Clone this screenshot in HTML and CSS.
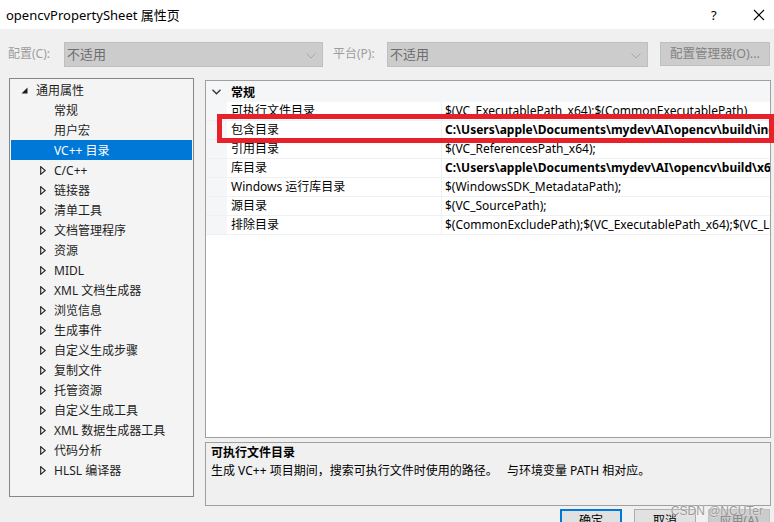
FILE: index.html
```html
<!DOCTYPE html>
<html lang="zh-CN">
<head>
    <meta charset="UTF-8">
    <title>opencvPropertySheet 属性页</title>
    <link rel="stylesheet" href="styles.css">
</head>
<body>
    <div class="dialog">
        <!-- Barra de título -->
        <div class="titlebar">
            <span class="title">opencvPropertySheet 属性页</span>
            <span class="help">?</span>
            <svg class="close" width="12" height="12" viewBox="0 0 12 12"><path d="M1 1L11 11M11 1L1 11" stroke="#000" stroke-width="1.1"/></svg>
        </div>

        <!-- Configuração / plataforma -->
        <div class="toolbar">
            <span class="label lbl-config">配置(C):</span>
            <div class="select sel-config">不适用<svg class="chev" width="10" height="6" viewBox="0 0 10 6"><path d="M0.5 0.5L5 5L9.5 0.5" fill="none" stroke="#a8a8a8"/></svg></div>
            <span class="label lbl-platform">平台(P):</span>
            <div class="select sel-platform">不适用<svg class="chev" width="10" height="6" viewBox="0 0 10 6"><path d="M0.5 0.5L5 5L9.5 0.5" fill="none" stroke="#a8a8a8"/></svg></div>
            <div class="btn-disabled cfg-btn">配置管理器(O)...</div>
        </div>

        <div class="main">
            <!-- Árvore -->
            <div class="tree">
                <div class="node root">
                    <svg class="arrow-open" width="7" height="7" viewBox="0 0 7 7"><polygon points="6.5,0.5 6.5,6.5 0.5,6.5" fill="#1e1e1e"/></svg>
                    <span>通用属性</span>
                </div>
                <div class="node leaf">常规</div>
                <div class="node leaf">用户宏</div>
                <div class="node leaf selected">VC++ 目录</div>
                <div id="tree-items"></div>
            </div>

            <!-- Grade de propriedades -->
            <div class="right">
                <div class="grid">
                    <div class="cat">
                        <svg class="cat-chev" width="9" height="6" viewBox="0 0 9 6"><path d="M0.5 0.8L4.5 4.8L8.5 0.8" fill="none" stroke="#333" stroke-width="1.3"/></svg>
                        <span>常规</span>
                    </div>
                    <div id="rows"></div>
                    <div class="highlight"></div>
                </div>
                <div class="desc">
                    <div class="desc-title">可执行文件目录</div>
                    <div class="desc-text">生成 VC++ 项目期间，搜索可执行文件时使用的路径。&nbsp;&nbsp; 与环境变量 PATH 相对应。</div>
                </div>
            </div>
        </div>

        <div class="footer">
            <div class="btn ok">确定</div>
            <div class="btn">取消</div>
            <div class="btn-disabled apply">应用(A)</div>
            <span class="watermark">CSDN @NCUTer</span>
        </div>
    </div>

    <script>
        // Itens recolhidos da árvore
        const treeItems = ["C/C++", "链接器", "清单工具", "文档管理程序", "资源", "MIDL", "XML 文档生成器",
            "浏览信息", "生成事件", "自定义生成步骤", "复制文件", "托管资源", "自定义生成工具",
            "XML 数据生成器工具", "代码分析", "HLSL 编译器"];

        const treeBox = document.getElementById('tree-items');
        treeItems.forEach(name => {
            const node = document.createElement('div');
            node.className = 'node child';
            node.innerHTML = `<svg class="arrow" width="6" height="9" viewBox="0 0 6 9"><polygon points="0.7,0.7 5.2,4.5 0.7,8.3" fill="none" stroke="#1e1e1e" stroke-width="1.1"/></svg><span>${name}</span>`;
            treeBox.appendChild(node);
        });

        // Linhas da grade
        const rows = [
            { name: "可执行文件目录", value: "$(VC_ExecutablePath_x64);$(CommonExecutablePath)" },
            { name: "包含目录", value: "C:\\Users\\apple\\Documents\\mydev\\AI\\opencv\\build\\include;$(IncludePath)", bold: true },
            { name: "引用目录", value: "$(VC_ReferencesPath_x64);" },
            { name: "库目录", value: "C:\\Users\\apple\\Documents\\mydev\\AI\\opencv\\build\\x64\\vc16\\lib;$(LibraryPath)", bold: true },
            { name: "Windows 运行库目录", value: "$(WindowsSDK_MetadataPath);" },
            { name: "源目录", value: "$(VC_SourcePath);" },
            { name: "排除目录", value: "$(CommonExcludePath);$(VC_ExecutablePath_x64);$(VC_LibraryPath_x64)" }
        ];

        const rowBox = document.getElementById('rows');
        rows.forEach(r => {
            const row = document.createElement('div');
            row.className = 'row';
            row.innerHTML = `<div class="gutter"></div><div class="name">${r.name}</div><div class="value${r.bold ? ' bold' : ''}">${r.value}</div>`;
            rowBox.appendChild(row);
        });
    </script>
</body>
</html>
```

FILE: styles.css
```css
* {
    margin: 0;
    padding: 0;
    box-sizing: border-box;
}

body {
    font-family: "Noto Sans", "Noto Sans CJK SC", sans-serif;
    font-size: 12px;
    color: #000;
    background-color: #f0f0f0;
    width: 774px;
    height: 522px;
    overflow: hidden;
}

.dialog {
    position: relative;
    height: 522px;
}

/* Barra de título */
.titlebar {
    height: 29px;
    background-color: #fff;
    display: flex;
    align-items: center;
    padding-left: 6px;
}

.titlebar .title {
    font-size: 13px;
    flex: 1;
    margin-top: -1px;
}

.titlebar .help {
    font-size: 13px;
    width: 20px;
    margin-right: 22px;
}

.titlebar .close {
    margin-right: 9px;
}

/* Barra de configuração */
.toolbar {
    height: 49px;
    display: flex;
    align-items: flex-start;
    padding-top: 13px;
    padding-left: 8px;
}

.label {
    color: #9d9d9d;
    height: 25px;
    line-height: 24px;
}

.lbl-config {
    width: 56px;
}

.lbl-platform {
    width: 54px;
    margin-left: 10px;
}

.select {
    position: relative;
    height: 25px;
    line-height: 23px;
    background-color: #cccccc;
    border: 1px solid #bfbfbf;
    color: #6d6d6d;
    font-size: 13px;
    padding-left: 2px;
}

.select .chev {
    position: absolute;
    right: 6px;
    top: 10px;
}

.sel-config {
    width: 259px;
}

.sel-platform {
    width: 261px;
}

.btn-disabled {
    background-color: #cccccc;
    border: 1px solid #bfbfbf;
    color: #838383;
    text-align: center;
}

.cfg-btn {
    width: 110px;
    height: 24px;
    line-height: 22px;
    margin-left: 12px;
    font-size: 12.5px;
}

/* Área principal */
.main {
    display: flex;
    padding-left: 9px;
    height: 419px;
}

.tree {
    width: 185px;
    height: 419px;
    background-color: #f4f4f4;
    border: 1px solid #828790;
    padding: 1px 1px 0;
}

.node {
    height: 20px;
    line-height: 20px;
    display: flex;
    align-items: center;
    white-space: nowrap;
    color: #1e1e1e;
}

.node span {
    margin-top: 1px;
}

.root {
    padding-left: 10px;
}

.root .arrow-open {
    margin-right: 8px;
}

.leaf {
    padding-left: 43px;
    padding-top: 1px;
}

.selected {
    background-color: #0078d7;
    color: #fff;
}

.child {
    padding-left: 29px;
}

.child .arrow {
    margin-right: 8px;
    margin-top: 1px;
}

.right {
    margin-left: 11px;
    margin-top: 2px;
    width: 566px;
}

.grid {
    position: relative;
    height: 358px;
    background-color: #fff;
    border: 1px solid #a0a0a0;
}

.cat {
    height: 21px;
    display: flex;
    align-items: center;
    font-weight: bold;
    background-color: #f5f6f8;
    padding-left: 6px;
}

.cat .cat-chev {
    margin-right: 10px;
}

.row {
    display: flex;
    height: 19px;
    line-height: 18px;
    border-bottom: 1px solid #f0f0f0;
    white-space: nowrap;
}

.gutter {
    width: 21px;
    background-color: #f5f6f8;
}

.name {
    width: 215px;
    padding-left: 4px;
    border-right: 1px solid #f0f0f0;
}

.value {
    flex: 1;
    padding-left: 3px;
    overflow: hidden;
}

.value.bold {
    font-weight: bold;
}

/* Destaque vermelho */
.highlight {
    position: absolute;
    left: 11px;
    top: 33px;
    width: 557px;
    height: 29px;
    border: 5px solid #e8202a;
}

/* Descrição */
.desc {
    margin-top: 4px;
    height: 64px;
    border: 1px solid #a0a0a0;
    padding: 1px 5px;
    line-height: 18px;
}

.desc-title {
    font-weight: bold;
}

/* Botões do rodapé */
.footer {
    display: flex;
    justify-content: flex-end;
    padding-top: 12px;
    padding-right: 4px;
}

.btn, .apply {
    width: 62px;
    height: 24px;
    line-height: 22px;
    text-align: center;
    margin-left: 12px;
}

.btn {
    background-color: #e1e1e1;
    border: 1px solid #adadad;
}

.btn.ok {
    border: 2px solid #0078d7;
    line-height: 20px;
}

.watermark {
    position: absolute;
    right: 11px;
    bottom: 4px;
    color: #9a9a9a;
    font-family: "Liberation Sans", sans-serif;
    font-size: 12px;
    text-shadow: 0 0 2px #fff;
}
```
